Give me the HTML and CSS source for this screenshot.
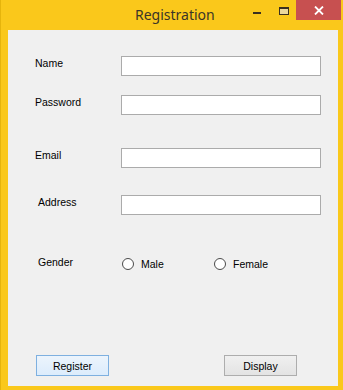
FILE: index.html
```html
<!DOCTYPE html>
<html lang="en">
<head>
    <meta charset="UTF-8">
    <meta name="viewport" content="width=device-width, initial-scale=1.0">
    <title>Registration</title>
    <link rel="stylesheet" href="styles.css">
</head>
<body>

    <div class="window">
        <!-- Title bar -->
        <div class="titlebar">
            <span class="title">Registration</span>
            <div class="controls">
                <span class="minimize"></span>
                <span class="maximize"></span>
                <span class="close">
                    <svg width="10" height="9" viewBox="0 0 10 9">
                        <path d="M1 0.5 L9 8.5 M9 0.5 L1 8.5" stroke="#fff" stroke-width="1.8" fill="none"/>
                    </svg>
                </span>
            </div>
        </div>

        <!-- Form -->
        <div class="client">
            <div class="field">
                <label>Name</label>
                <input type="text">
            </div>
            <div class="field password">
                <label>Password</label>
                <input type="password">
            </div>
            <div class="field email">
                <label>Email</label>
                <input type="text">
            </div>
            <div class="field address">
                <label class="shift">Address</label>
                <input type="text">
            </div>
            <div class="field gender">
                <label class="shift">Gender</label>
                <div class="option"><span class="radio"></span>Male</div>
                <div class="option"><span class="radio"></span>Female</div>
            </div>
            <div class="buttons">
                <button class="btn primary">Register</button>
                <button class="btn">Display</button>
            </div>
        </div>
    </div>

</body>
</html>
```

FILE: styles.css
```css
/* General */
body {
    margin: 0;
    font-family: "Liberation Sans", Arial, sans-serif;
}

.window {
    width: 343px;
    height: 390px;
    background-color: #fac81b;
    box-shadow: inset 1px 0 0 #e6b40c;
}

/* Title bar */
.titlebar {
    height: 30px;
    display: flex;
    align-items: flex-start;
}

.title {
    margin-left: 135px;
    margin-top: 5px;
    font-family: "Noto Sans", sans-serif;
    font-size: 14px;
    line-height: 20px;
    color: #3a3528;
}

.controls {
    margin-left: auto;
    margin-right: 2px;
    display: flex;
    align-items: flex-start;
}

.minimize {
    width: 8px;
    height: 2px;
    margin-top: 12px;
    background-color: #3a3020;
}

.maximize {
    width: 10px;
    height: 8px;
    margin-top: 7px;
    margin-left: 18px;
    box-sizing: border-box;
    border: 1px solid #3a3020;
    border-top-width: 2px;
    background-color: #ecd89a;
}

.close {
    width: 45px;
    height: 20px;
    margin-left: 7px;
    background-color: #c75050;
    display: flex;
    align-items: center;
    justify-content: center;
}

/* Client area */
.client {
    margin-left: 8px;
    width: 330px;
    height: 356px;
    box-sizing: border-box;
    padding-top: 26px;
    padding-left: 27px;
    background-color: #f0f0f0;
    font-size: 10.5px;
    color: #000;
}

.field {
    display: flex;
    align-items: flex-start;
    height: 20px;
}

.field label {
    width: 86px;
    box-sizing: border-box;
    line-height: 14px;
}

.field label.shift {
    padding-left: 3px;
}

.field input {
    width: 200px;
    height: 20px;
    box-sizing: border-box;
    margin: 0;
    padding: 0 3px;
    border: 1px solid #ababab;
    background-color: #fff;
    outline: none;
}

.password { margin-top: 19px; }
.email { margin-top: 33px; }
.address { margin-top: 27px; }

/* Gender */
.gender {
    margin-top: 40px;
    height: 18px;
}

.option {
    width: 92px;
    height: 18px;
    display: flex;
    align-items: center;
}

.radio {
    width: 12px;
    height: 12px;
    box-sizing: border-box;
    margin-left: 1px;
    margin-right: 7px;
    border: 1px solid #4a4a4a;
    border-radius: 50%;
    background-color: #fff;
}

/* Buttons */
.buttons {
    margin-top: 82px;
    padding-left: 1px;
    display: flex;
    gap: 115px;
}

.btn {
    width: 73px;
    height: 21px;
    margin: 0;
    padding: 0;
    font-family: "Liberation Sans", Arial, sans-serif;
    font-size: 10.5px;
    color: #000;
    border: 1px solid #adadad;
    background: linear-gradient(#f0f0f0, #e3e3e3);
}

.btn.primary {
    border-color: #7eb0e0;
    background: linear-gradient(#ecf4fc, #dcecfc);
}
```
